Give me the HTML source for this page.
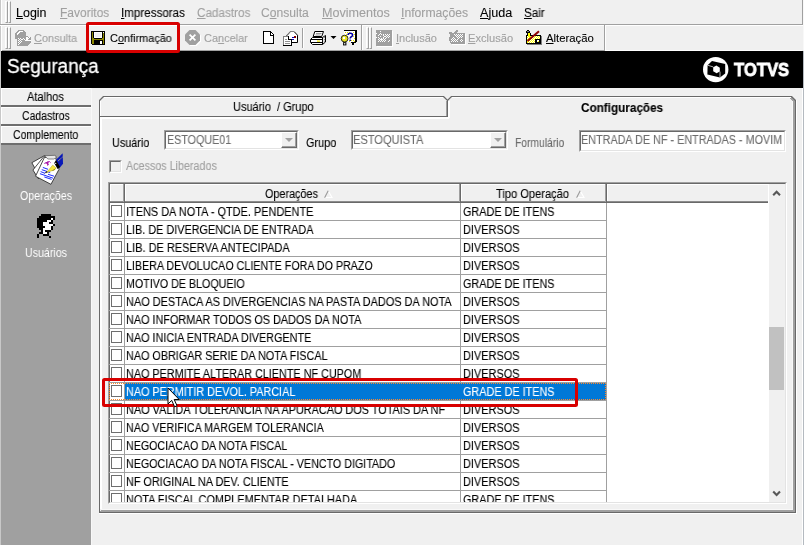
<!DOCTYPE html>
<html><head><meta charset="utf-8">
<style>
*{box-sizing:border-box;margin:0;padding:0}
html,body{width:804px;height:545px;overflow:hidden;background:#f0f0f0;font-family:"Liberation Sans",sans-serif}
.a{position:absolute}
.t{position:absolute;white-space:pre;transform-origin:0 0;will-change:transform;-webkit-text-stroke:.1px currentColor;font-family:"Liberation Sans",sans-serif}
.t u{text-decoration:underline;text-decoration-thickness:1px;text-underline-offset:1px}
.gr{position:absolute;width:3px;border-left:1px solid #fff;border-top:1px solid #fff;border-right:1px solid #a0a0a0;border-bottom:1px solid #a0a0a0}
.cb{position:absolute;width:11px;height:12px;border:1px solid #6e6e6e;background:#fff}
.sbtn{position:absolute;left:1px;width:90px;background:#f0f0f0;border-top:1px solid #fff;border-left:1px solid #fff}
.combo{position:absolute;height:20px;background:#fff;border-top:1px solid #a0a0a0;border-left:1px solid #a0a0a0;border-right:1px solid #fff;border-bottom:1px solid #fff}
.combo i{position:absolute;left:0;top:0;right:0;bottom:0;border-top:1px solid #696969;border-left:1px solid #696969;border-right:1px solid #e3e3e3;border-bottom:1px solid #e3e3e3}
.dbtn{position:absolute;width:16px;height:16px;background:#f0f0f0;border-top:1px solid #fff;border-left:1px solid #fff;border-right:1px solid #696969;border-bottom:1px solid #696969}
.dbtn i{position:absolute;left:0;top:0;right:0;bottom:0;border-right:1px solid #a0a0a0;border-bottom:1px solid #a0a0a0}
.dbtn b{position:absolute;left:3px;top:5px;width:0;height:0;border-left:4px solid transparent;border-right:4px solid transparent;border-top:4px solid #a0a0a0}
</style></head><body>
<!-- left edge strip -->
<div class="a" style="left:0;top:0;width:1px;height:545px;background:#c8c8c8"></div>
<div class="a" style="left:1px;top:0;width:1px;height:51px;background:#fff"></div>
<!-- menu grips -->
<div class="gr" style="left:5px;top:1px;height:22px"></div>
<div class="gr" style="left:8px;top:1px;height:22px"></div>
<!-- menu/toolbar separator -->
<div class="a" style="left:0;top:24px;width:804px;height:1px;background:#a0a0a0"></div>
<div class="a" style="left:0;top:25px;width:804px;height:1px;background:#fff"></div>
<!-- toolbar grips -->
<div class="gr" style="left:5px;top:27px;height:22px"></div>
<div class="gr" style="left:8px;top:27px;height:22px"></div>
<div class="gr" style="left:366px;top:27px;height:22px"></div>
<div class="gr" style="left:369px;top:27px;height:22px"></div>
<!-- toolbar separators -->
<div class="a" style="left:302px;top:28px;width:1px;height:20px;background:#a0a0a0"></div>
<div class="a" style="left:303px;top:28px;width:1px;height:20px;background:#fff"></div>
<div class="a" style="left:361px;top:25px;width:1px;height:26px;background:#a0a0a0"></div>
<div class="a" style="left:362px;top:26px;width:1px;height:25px;background:#fff"></div>
<div class="a" style="left:604px;top:25px;width:1px;height:26px;background:#a0a0a0"></div>
<div class="a" style="left:605px;top:26px;width:1px;height:25px;background:#fff"></div>
<div class="a" style="left:2px;top:50px;width:603px;height:1px;background:#a0a0a0"></div>
<div class="a" style="left:605px;top:50px;width:197px;height:1px;background:#fff"></div>
<svg class="a" style="left:0;top:26px" width="610" height="25" viewBox="0 26 610 25">
<!-- Consulta (disabled) -->
<g shape-rendering="crispEdges">
<path d="M18 30 H23 L26 33 V39 H17 V39 H15 V33 Z" fill="#a0a0a0"/>
<path d="M17 39 H26 V41 H31 V42 L27 46 H17 Z" fill="#a0a0a0"/>
<path d="M26 37 h4 v1 h1 v3 h-5z" fill="#fff"/>
<path d="M26 36 h2 v1 h1 v1 h1 v-1 h1 v3 h-3 v-1 h1 v-1 h-1 v-1 h-2 z" fill="#a0a0a0"/>
<path d="M17 33 h1 v-1 h1 v-1 h2 v1 h-1 v1 h-1 v1 h-1 v1 h-1z M21 31 h2 v1 h-2z" fill="#fff"/>
<path d="M18 38h1v1h-1z M20 38h1v1h-1z M19 39h1v1h-1z M21 39h1v1h-1z M18 40h1v1h-1z M20 40h1v1h-1z M22 39h1v1h-1z M23 38h1v1h-1z M24 39h1v1h-1z M25 40h1v1h-1z M19 41h1v1h-1z M18 42h1v1h-1z M18 44h1v1h-1z M19 43h1v1h-1z M20 42h1v1h-1z M21 41h1v1h-1z" fill="#fff"/>
</g>
<!-- floppy -->
<g shape-rendering="crispEdges">
<rect x="91" y="31" width="14" height="14" fill="#000"/>
<rect x="92" y="32" width="1" height="12" fill="#8c8800"/>
<rect x="103" y="33" width="1" height="11" fill="#8c8800"/>
<rect x="103" y="32" width="1" height="1" fill="#fff"/>
<rect x="92" y="38" width="2" height="6" fill="#8c8800"/>
<rect x="102" y="38" width="2" height="2" fill="#8c8800"/>
<rect x="92" y="39" width="12" height="1" fill="#8c8800"/>
<rect x="94" y="32" width="8" height="6" fill="#fff"/>
<rect x="95" y="33" width="6" height="4" fill="#f0f0f0"/>
<rect x="100" y="41" width="2" height="3" fill="#fff"/>
<rect x="91" y="44" width="1" height="1" fill="#f0f0f0"/>
</g>
<!-- Cancelar (disabled) -->
<path d="M190.5 31 H196.5 L201 35.5 V41.5 L196.5 46 H190.5 L186 41.5 V35.5 Z" fill="#fff"/>
<path d="M189.5 30 H195.5 L200 34.5 V40.5 L195.5 45 H189.5 L185 40.5 V34.5 Z" fill="#a0a0a0"/>
<path d="M189.6 34.6 L195.4 40.4 M195.4 34.6 L189.6 40.4" stroke="#fff" stroke-width="1.7" fill="none"/>
<!-- new doc -->
<g shape-rendering="crispEdges">
<path d="M263.5 31.5 H270.5 L273.5 34.5 V43.5 H263.5 Z" fill="#fff" stroke="#000" stroke-width="1"/>
<path d="M270 32 v3 h3" fill="none" stroke="#000" stroke-width="1"/>
<rect x="263" y="31" width="1" height="13" fill="#000"/>
<rect x="263" y="43" width="11" height="1" fill="#000"/>
</g>
<!-- mail/doc -->
<path d="M290.5 31.5 H294 L297.5 35.2 V42.5 H286.5 V35.8 Z" fill="#fff" stroke="#000" stroke-width="1"/>
<path d="M294 31.5 H290.5 L286.5 35.8" stroke="#808080" stroke-width="1.1" fill="none"/>
<g shape-rendering="crispEdges">
<rect x="294" y="36" width="2" height="2" fill="#800000"/>
<rect x="291" y="37" width="3" height="1" fill="#0000c0"/>
<rect x="292" y="39" width="2" height="1" fill="#0000c0"/>
<rect x="283" y="36" width="9" height="10" fill="#fff"/>
<rect x="283" y="36" width="6" height="1" fill="#808080"/>
<rect x="283" y="36" width="1" height="10" fill="#808080"/>
<rect x="288" y="36" width="1" height="3" fill="#000"/>
<rect x="288" y="39" width="4" height="1" fill="#000"/>
<rect x="291" y="39" width="1" height="7" fill="#000"/>
<rect x="283" y="45" width="9" height="1" fill="#000"/>
<rect x="285" y="39" width="2" height="1" fill="#909090"/>
<rect x="285" y="41" width="5" height="1" fill="#909090"/>
<rect x="285" y="43" width="5" height="1" fill="#909090"/>
</g>
<!-- printer -->
<path d="M314.8 31.5 H323.5 L321.7 36.5 H313.2 Z" fill="#fff" stroke="#000" stroke-width="1"/>
<path d="M316 33.5 H321.5 M315.5 35 H320.5" stroke="#808080" stroke-width=".8"/>
<path d="M312.5 37.5 H322.5 L325.5 35.5 V42 L322.5 44.5 H312.5 L310.5 42.5 V39.5 Z" fill="#fff" stroke="#000" stroke-width="1"/>
<path d="M311 39.5 H322.5 M311 42.5 H322.5 M322.5 37.5 V44.5" stroke="#000" stroke-width="1" fill="none"/>
<rect x="311" y="39" width="12" height="1" fill="#000"/>
<rect x="311" y="42" width="12" height="1" fill="#000"/>
<rect x="317" y="40.5" width="3" height="1.2" fill="#e8e000"/>
<path d="M323.5 38 l1.5 -1 M323.5 40 l1.5 -1 M323.5 42 l1.5 -1.2" stroke="#606060" stroke-width=".8"/>
<!-- dropdown -->
<path d="M330.5 36 H336.5 L333.5 39 Z" fill="#000"/>
<!-- help -->
<g shape-rendering="crispEdges">
<rect x="344" y="31" width="12" height="11" fill="#fff"/>
<rect x="344" y="30" width="12" height="1" fill="#000"/>
<rect x="355" y="30" width="2" height="12" fill="#000"/>
<rect x="351" y="42" width="5" height="1" fill="#000"/>
<rect x="352" y="43" width="2" height="2" fill="#000"/>
<path d="M345 32h1v1h-1z M347 32h1v1h-1z M349 32h1v1h-1z M353 32h1v1h-1z M346 34h1v1h-1z M354 34h1v1h-1z M353 36h1v1h-1z M354 38h1v1h-1z M353 40h1v1h-1z M351 40h1v1h-1z M349 41h1v1h-1z M354 41h1v1h-1z" fill="#e8e000"/>
</g>
<path d="M348 35 Q348 33.2 350.3 33.2 Q352.6 33.2 352.6 35 Q352.6 36.3 351 37 Q350.2 37.5 350.2 38.6" fill="none" stroke="#0000a0" stroke-width="1.6"/>
<rect x="349.4" y="39.6" width="1.6" height="1.4" fill="#0000a0"/>
<circle cx="344.6" cy="38.6" r="3.4" fill="#e4e020" stroke="#000" stroke-width=".8"/>
<circle cx="344" cy="38" r="1.2" fill="#fff"/>
<rect x="343" y="42.2" width="3.4" height="3.2" fill="#000"/>
<rect x="343.8" y="43.2" width="1.6" height="1.2" fill="#fff"/>
<!-- Inclusao (disabled) -->
<g shape-rendering="crispEdges">
<rect x="377" y="31" width="16" height="16" fill="#fff"/>
<rect x="376" y="30" width="16" height="16" fill="#a0a0a0"/>
<path d="M380 31h1v1h-1z M380 33h1v1h-1z M379 34h1v1h-1z M381 34h1v1h-1z M378 35h1v1h-1z M380 36h1v1h-1z M378 37h1v1h-1z M379 38h1v1h-1z M378 39h1v1h-1z M380 39h1v1h-1z M379 40h1v1h-1z M381 40h1v1h-1z M378 41h1v1h-1z M380 41h1v1h-1z M382 41h1v1h-1z M384 41h1v1h-1z M381 38h1v2h-1z M383 34h1v2h-1z M383 37h1v2h-1z M382 39h1v1h-1z M384 39h1v1h-1z M383 40h1v1h-1z M385 40h1v1h-1z M385 38h1v1h-1z M384 36h2v1h-2z M385 34h1v1h-1z M387 34h1v1h-1z M389 34h1v1h-1z M386 35h1v1h-1z M388 35h1v1h-1z M387 36h1v1h-1z M389 36h1v1h-1z M386 37h1v1h-1z M388 37h1v1h-1z M389 40h1v1h-1z M388 41h1v1h-1z M376 33h1v1h-1z M376 37h1v1h-1z" fill="#fff"/>
</g>
<!-- Exclusao (disabled) -->
<g shape-rendering="crispEdges">
<path d="M451 34 H466 V45 H452 V44 H451Z" fill="#fff"/>
<path d="M450 33 H465 V44 H451 V43 H450 V41 H449 V37 H450 V34 H449 V32 H452 V33 Z" fill="#a0a0a0"/>
<path d="M453 33 L456 30 H458 V31 L456 33 Z" fill="#a0a0a0"/>
<path d="M454 34h1v1h-1z M456 34h1v1h-1z M458 34h1v1h-1z M460 34h1v1h-1z M462 34h1v1h-1z M455 35h1v1h-1z M457 35h1v1h-1z M459 35h1v1h-1z M461 35h1v1h-1z M456 36h1v1h-1z M458 36h1v1h-1z M460 36h1v1h-1z M462 36h1v1h-1z M457 37h1v1h-1z M459 37h1v1h-1z M461 37h1v1h-1z M453 37h1v1h-1z M452 38h1v1h-1z M454 38h1v1h-1z M458 38h1v1h-1z M451 39h1v1h-1z M453 39h1v1h-1z M455 39h1v1h-1z M457 39h1v1h-1z M452 40h1v1h-1z M454 40h1v1h-1z M456 40h1v1h-1z M451 41h1v1h-1z M453 41h1v1h-1z M455 41h1v1h-1z M457 41h1v1h-1z M461 39h1v1h-1z M460 40h1v1h-1z M462 40h1v1h-1z M461 41h1v1h-1z" fill="#fff"/>
</g>
<!-- Alteracao -->
<g shape-rendering="crispEdges">
<rect x="527" y="36" width="15" height="9" fill="#808080"/>
<rect x="526" y="35" width="15" height="9" fill="#000"/>
<rect x="527" y="36" width="13" height="7" fill="#ffff00"/>
<path d="M528 36h1v1h-1z M534 36h1v1h-1z M536 36h1v1h-1z M538 36h1v1h-1z M533 37h1v1h-1z M535 37h1v1h-1z M537 37h1v1h-1z M539 37h1v1h-1z M527 38h1v1h-1z M532 38h1v1h-1z M534 38h1v1h-1z M536 38h1v1h-1z M538 38h1v1h-1z M531 39h1v1h-1z M533 39h1v1h-1z M530 40h1v1h-1z M532 40h1v1h-1z M534 40h1v1h-1z M529 41h1v1h-1z M531 41h1v1h-1z M533 41h1v1h-1z M528 42h1v1h-1z M530 42h1v1h-1z M532 42h1v1h-1z M534 42h1v1h-1z" fill="#fff"/>
<path d="M527 36h1v1h-1z M529 36h1v1h-1z M531 36h1v1h-1z M528 37h1v1h-1z M530 37h1v1h-1z M527 38h1v1h-1z M529 38h1v1h-1z M528 39h1v1h-1z M527 40h1v1h-1z" fill="#fff"/>
<rect x="535" y="39" width="5" height="4" fill="#000"/>
<rect x="537" y="40" width="2" height="2" fill="#fff"/>
<rect x="538" y="41" width="1" height="1" fill="#ffff00"/>
<rect x="526" y="31" width="4" height="2" fill="#000"/>
<rect x="527" y="30" width="2" height="1" fill="#000"/>
<rect x="527" y="31" width="2" height="1" fill="#808080"/>
<rect x="527" y="33" width="2" height="2" fill="#000"/>
<rect x="528" y="33" width="2" height="4" fill="#ffff00"/>
<rect x="529" y="35" width="2" height="3" fill="#ffff00"/>
<rect x="530" y="33" width="1" height="3" fill="#000"/>
</g>
<path d="M527.5 41 L539 31.2" stroke="#900000" stroke-width="2" fill="none"/>
</svg>

<!-- banner -->
<div class="a" style="left:1px;top:51px;width:802px;height:37px;background:#000"></div>
<div class="a" style="left:802px;top:0;width:1px;height:25px;background:#a0a0a0"></div>
<div class="a" style="left:803px;top:0;width:1px;height:51px;background:#f8f8f8"></div>
<div class="a" style="left:802px;top:88px;width:1px;height:457px;background:#fff"></div>
<div class="a" style="left:803px;top:51px;width:1px;height:494px;background:#b4bac0"></div>

<!-- sidebar -->
<div class="a" style="left:1px;top:88px;width:90px;height:457px;background:#a0a0a0"></div>
<div class="a" style="left:91px;top:88px;width:1px;height:457px;background:#f8f8f8"></div>
<div class="sbtn" style="top:88px;height:17px"></div>
<div class="sbtn" style="top:107px;height:17px"></div>
<div class="sbtn" style="top:126px;height:17px"></div>
<div class="a" style="left:1px;top:105px;width:90px;height:2px;background:#6e6e6e"></div>
<div class="a" style="left:1px;top:124px;width:90px;height:2px;background:#6e6e6e"></div>
<div class="a" style="left:1px;top:143px;width:90px;height:2px;background:#6e6e6e"></div>
<!-- Operacoes icon -->
<svg class="a" style="left:26px;top:148px" width="44" height="40" viewBox="0 0 600 545">
<g stroke="#202020" stroke-width="11" stroke-linejoin="round">
<path d="M80 200 L250 105 L330 135 L150 330 Z" fill="#fff"/>
<path d="M95 300 L240 120 L400 110 L170 420 Z" fill="#fff"/>
<path d="M250 130 L400 120 L450 290 L340 495 L130 385 Z" fill="#fff"/>
</g>
<path d="M250 105 L390 100 L420 125 L380 150 L300 150 Z" fill="#e8e8e8" stroke="#404040" stroke-width="8"/>
<g stroke="#1020ff" stroke-width="13" fill="none">
<path d="M230 265 L300 290"/><path d="M215 295 L330 335"/><path d="M200 322 L260 345 M300 358 L385 385"/><path d="M190 350 L370 412"/><path d="M250 395 L350 428"/>
</g>
<path d="M250 210 L320 185 L335 200 M300 180 L295 240 M270 200 L310 225" stroke="#a000a0" stroke-width="13" fill="none"/>
<path d="M410 160 L500 70 L505 215 L455 275 Z" fill="#0818b8"/>
<path d="M438 176 L498 124" stroke="#ffe860" stroke-width="13" stroke-dasharray="11 11"/>
<path d="M385 205 L410 165 L465 260 L430 285 Z" fill="#000"/>
<circle cx="405" cy="210" r="8" fill="#fff"/>
<path d="M365 232 L412 272 L385 300 L275 338 Z" fill="#f4e640" stroke="#807000" stroke-width="4"/>
<path d="M408 276 L385 302 L345 312 Z" fill="#807000"/>
<path d="M292 330 L250 348 L280 318 Z" fill="#000"/>
</svg>
<!-- Usuarios icon -->
<svg class="a" style="left:30px;top:208px" width="32" height="34" viewBox="0 0 513 545" shape-rendering="crispEdges">
<g fill="#000">
<rect x="175" y="95" width="160" height="35"/>
<rect x="145" y="128" width="255" height="34"/>
<rect x="115" y="160" width="285" height="32"/>
<rect x="115" y="190" width="255" height="36"/>
<rect x="115" y="224" width="95" height="98"/>
<rect x="115" y="290" width="125" height="32"/>
<rect x="145" y="320" width="65" height="32"/>
<rect x="180" y="350" width="30" height="36"/>
<rect x="150" y="385" width="60" height="30"/>
<rect x="115" y="420" width="30" height="56"/>
<rect x="210" y="420" width="95" height="26"/>
<rect x="275" y="380" width="30" height="60"/>
<rect x="305" y="450" width="30" height="28"/>
<rect x="340" y="290" width="30" height="60"/>
<rect x="370" y="258" width="30" height="28"/>
</g>
<g fill="#fff">
<rect x="340" y="160" width="30" height="32"/>
<rect x="275" y="195" width="65" height="32"/>
<rect x="210" y="225" width="160" height="66"/>
<rect x="240" y="290" width="100" height="60"/>
<rect x="210" y="320" width="35" height="96"/>
<rect x="245" y="380" width="30" height="36"/>
</g>
<g fill="#000">
<rect x="305" y="228" width="65" height="24"/>
<rect x="340" y="195" width="30" height="34"/>
<rect x="245" y="355" width="90" height="26"/>
</g>
</svg>

<!-- tab panel -->
<svg class="a" style="left:0;top:0" width="804" height="545" shape-rendering="crispEdges">
<g fill="none" stroke-width="1">
<!-- white highlights -->
<path d="M100.5 101 V509" stroke="#fff"/>
<path d="M101.5 118 V509" stroke="#fff"/>
<path d="M104 97.5 H443" stroke="#fff"/>
<path d="M452 97.5 H792" stroke="#fff"/>
<path d="M100 117.5 H449 M100 118.5 H449" stroke="#fff"/>
<path d="M448.5 101 V118 M449.5 101 V118" stroke="#fff"/>
<path d="M792.5 101 V510" stroke="#f8f8f8"/>
<path d="M101 509.5 H793" stroke="#f8f8f8"/>
<path d="M796.5 100 V514 M99 513.5 H797" stroke="#fff"/>
<!-- gray -->
<path d="M793.5 101 V512 M794.5 100 V512" stroke="#a0a0a0"/>
<path d="M101 510.5 H795 M100 511.5 H795" stroke="#a0a0a0"/>
<path d="M446.5 101 V116" stroke="#a0a0a0"/>
<!-- dark -->
<path d="M99.5 100 V513" stroke="#696969"/>
<path d="M103 96.5 H444" stroke="#696969"/>
<path d="M451 96.5 H792" stroke="#696969"/>
<path d="M99 116.5 H448" stroke="#696969"/>
<path d="M447.5 100 V117" stroke="#696969"/>
<path d="M795.5 100 V513" stroke="#696969"/>
<path d="M99 512.5 H796" stroke="#696969"/>
</g>
<path d="M790.6 97.6 L794 101" stroke="#a0a0a0" stroke-width="2.2" fill="none"/>
<g fill="none" stroke="#696969" stroke-width="1.2" shape-rendering="auto">
<path d="M99.5 100.5 L103.5 96.5"/>
<path d="M443.5 96.5 L447.5 100.5 L451.5 96.5"/>
<path d="M791.5 96.5 L795.5 100.5"/>
</g>
</svg>
<!-- form controls -->
<div class="combo" style="left:164px;top:130px;width:135px"><i></i></div>
<div class="dbtn" style="left:281px;top:132px"><i></i><b></b></div>
<div class="combo" style="left:351px;top:130px;width:157px"><i></i></div>
<div class="dbtn" style="left:490px;top:132px"><i></i><b></b></div>
<div class="combo" style="left:579px;top:130px;width:207px;height:22px"><i></i></div>
<!-- disabled checkbox -->
<div class="combo" style="left:109px;top:160px;width:13px;height:13px;background:#f0f0f0"><i></i></div>
<!-- grid -->
<div class="a" style="left:108px;top:182px;width:679px;height:322px;background:#fff;border-top:1px solid #a0a0a0;border-left:1px solid #a0a0a0;border-right:1px solid #fff;border-bottom:1px solid #fff"></div>
<div class="a" style="left:109px;top:183px;width:677px;height:320px;border-top:1px solid #696969;border-left:1px solid #696969;border-right:1px solid #e3e3e3;border-bottom:1px solid #e3e3e3"></div>
<div id="gridclip" class="a" style="left:0;top:0;width:804px;height:502px;overflow:hidden">
<!-- header -->
<div class="a" style="left:110px;top:184px;width:658px;height:17px;background:#f0f0f0"></div>
<div class="a" style="left:110px;top:184px;width:658px;height:1px;background:#fff"></div>
<div class="a" style="left:110px;top:184px;width:1px;height:17px;background:#fff"></div>
<div class="a" style="left:125px;top:184px;width:1px;height:17px;background:#fff"></div>
<div class="a" style="left:461px;top:184px;width:1px;height:17px;background:#fff"></div>
<div class="a" style="left:607px;top:184px;width:1px;height:17px;background:#fff"></div>
<div class="a" style="left:110px;top:201px;width:658px;height:1px;background:#8c8c8c"></div>
<div class="a" style="left:110px;top:202px;width:658px;height:1px;background:#696969"></div>
<div class="a" style="left:123px;top:184px;width:1px;height:18px;background:#a0a0a0"></div>
<div class="a" style="left:124px;top:184px;width:1px;height:19px;background:#696969"></div>
<div class="a" style="left:459px;top:184px;width:1px;height:18px;background:#a0a0a0"></div>
<div class="a" style="left:460px;top:184px;width:1px;height:19px;background:#696969"></div>
<div class="a" style="left:605px;top:184px;width:1px;height:18px;background:#a0a0a0"></div>
<div class="a" style="left:606px;top:184px;width:1px;height:19px;background:#696969"></div>
<!-- column lines -->
<div class="a" style="left:124px;top:203px;width:1px;height:299px;background:#a0a0a0"></div>
<div class="a" style="left:460px;top:203px;width:1px;height:299px;background:#a0a0a0"></div>
<div class="a" style="left:606px;top:203px;width:1px;height:299px;background:#a0a0a0"></div>
<div class="a" style="left:109px;top:220px;width:498px;height:1px;background:#a0a0a0"></div>
<div class="cb" style="left:111px;top:205px"></div>
<div class="t" style="left:126.04px;top:205px;font-size:12px;line-height:14px;transform:scaleX(0.9106);color:#000;font-weight:400;">ITENS DA NOTA - QTDE. PENDENTE</div>
<div class="t" style="left:462.54px;top:205px;font-size:12px;line-height:14px;transform:scaleX(0.9028);color:#000;font-weight:400;">GRADE DE ITENS</div>
<div class="a" style="left:109px;top:238px;width:498px;height:1px;background:#a0a0a0"></div>
<div class="cb" style="left:111px;top:223px"></div>
<div class="t" style="left:126.04px;top:223px;font-size:12px;line-height:14px;transform:scaleX(0.9037);color:#000;font-weight:400;">LIB. DE DIVERGENCIA DE ENTRADA</div>
<div class="t" style="left:462.53px;top:223px;font-size:12px;line-height:14px;transform:scaleX(0.9113);color:#000;font-weight:400;">DIVERSOS</div>
<div class="a" style="left:109px;top:256px;width:498px;height:1px;background:#a0a0a0"></div>
<div class="cb" style="left:111px;top:241px"></div>
<div class="t" style="left:126.03px;top:241px;font-size:12px;line-height:14px;transform:scaleX(0.9160);color:#000;font-weight:400;">LIB. DE RESERVA ANTECIPADA</div>
<div class="t" style="left:462.53px;top:241px;font-size:12px;line-height:14px;transform:scaleX(0.9113);color:#000;font-weight:400;">DIVERSOS</div>
<div class="a" style="left:109px;top:274px;width:498px;height:1px;background:#a0a0a0"></div>
<div class="cb" style="left:111px;top:259px"></div>
<div class="t" style="left:126.05px;top:259px;font-size:12px;line-height:14px;transform:scaleX(0.8915);color:#000;font-weight:400;">LIBERA DEVOLUCAO CLIENTE FORA DO PRAZO</div>
<div class="t" style="left:462.53px;top:259px;font-size:12px;line-height:14px;transform:scaleX(0.9113);color:#000;font-weight:400;">DIVERSOS</div>
<div class="a" style="left:109px;top:292px;width:498px;height:1px;background:#a0a0a0"></div>
<div class="cb" style="left:111px;top:277px"></div>
<div class="t" style="left:126.05px;top:277px;font-size:12px;line-height:14px;transform:scaleX(0.8902);color:#000;font-weight:400;">MOTIVO DE BLOQUEIO</div>
<div class="t" style="left:462.54px;top:277px;font-size:12px;line-height:14px;transform:scaleX(0.9028);color:#000;font-weight:400;">GRADE DE ITENS</div>
<div class="a" style="left:109px;top:310px;width:498px;height:1px;background:#a0a0a0"></div>
<div class="cb" style="left:111px;top:295px"></div>
<div class="t" style="left:126.04px;top:295px;font-size:12px;line-height:14px;transform:scaleX(0.9101);color:#000;font-weight:400;">NAO DESTACA AS DIVERGENCIAS NA PASTA DADOS DA NOTA</div>
<div class="t" style="left:462.53px;top:295px;font-size:12px;line-height:14px;transform:scaleX(0.9113);color:#000;font-weight:400;">DIVERSOS</div>
<div class="a" style="left:109px;top:328px;width:498px;height:1px;background:#a0a0a0"></div>
<div class="cb" style="left:111px;top:313px"></div>
<div class="t" style="left:126.04px;top:313px;font-size:12px;line-height:14px;transform:scaleX(0.9026);color:#000;font-weight:400;">NAO INFORMAR TODOS OS DADOS DA NOTA</div>
<div class="t" style="left:462.53px;top:313px;font-size:12px;line-height:14px;transform:scaleX(0.9113);color:#000;font-weight:400;">DIVERSOS</div>
<div class="a" style="left:109px;top:346px;width:498px;height:1px;background:#a0a0a0"></div>
<div class="cb" style="left:111px;top:331px"></div>
<div class="t" style="left:126.04px;top:331px;font-size:12px;line-height:14px;transform:scaleX(0.9028);color:#000;font-weight:400;">NAO INICIA ENTRADA DIVERGENTE</div>
<div class="t" style="left:462.53px;top:331px;font-size:12px;line-height:14px;transform:scaleX(0.9113);color:#000;font-weight:400;">DIVERSOS</div>
<div class="a" style="left:109px;top:364px;width:498px;height:1px;background:#a0a0a0"></div>
<div class="cb" style="left:111px;top:349px"></div>
<div class="t" style="left:126.04px;top:349px;font-size:12px;line-height:14px;transform:scaleX(0.9003);color:#000;font-weight:400;">NAO OBRIGAR SERIE DA NOTA FISCAL</div>
<div class="t" style="left:462.53px;top:349px;font-size:12px;line-height:14px;transform:scaleX(0.9113);color:#000;font-weight:400;">DIVERSOS</div>
<div class="a" style="left:109px;top:382px;width:498px;height:1px;background:#a0a0a0"></div>
<div class="cb" style="left:111px;top:367px"></div>
<div class="t" style="left:126.04px;top:367px;font-size:12px;line-height:14px;transform:scaleX(0.9010);color:#000;font-weight:400;">NAO PERMITE ALTERAR CLIENTE NF CUPOM</div>
<div class="t" style="left:462.53px;top:367px;font-size:12px;line-height:14px;transform:scaleX(0.9113);color:#000;font-weight:400;">DIVERSOS</div>
<div class="a" style="left:125px;top:383px;width:481px;height:17px;background:#0078d7"></div>
<div class="a" style="left:109px;top:400px;width:498px;height:1px;background:#a0a0a0"></div>
<div class="cb" style="left:111px;top:385px"></div>
<div class="t" style="left:126.04px;top:385px;font-size:12px;line-height:14px;transform:scaleX(0.9014);color:#fff;font-weight:400;-webkit-text-stroke:.1px currentColor;">NAO PERMITIR DEVOL. PARCIAL</div>
<div class="t" style="left:462.54px;top:385px;font-size:12px;line-height:14px;transform:scaleX(0.9028);color:#fff;font-weight:400;-webkit-text-stroke:.1px currentColor;">GRADE DE ITENS</div>
<div class="a" style="left:109px;top:418px;width:498px;height:1px;background:#a0a0a0"></div>
<div class="cb" style="left:111px;top:403px"></div>
<div class="t" style="left:126.04px;top:403px;font-size:12px;line-height:14px;transform:scaleX(0.9063);color:#000;font-weight:400;">NAO VALIDA TOLERANCIA NA APURACAO DOS TOTAIS DA NF</div>
<div class="t" style="left:462.53px;top:403px;font-size:12px;line-height:14px;transform:scaleX(0.9113);color:#000;font-weight:400;">DIVERSOS</div>
<div class="a" style="left:109px;top:436px;width:498px;height:1px;background:#a0a0a0"></div>
<div class="cb" style="left:111px;top:421px"></div>
<div class="t" style="left:126.05px;top:421px;font-size:12px;line-height:14px;transform:scaleX(0.8949);color:#000;font-weight:400;">NAO VERIFICA MARGEM TOLERANCIA</div>
<div class="t" style="left:462.53px;top:421px;font-size:12px;line-height:14px;transform:scaleX(0.9113);color:#000;font-weight:400;">DIVERSOS</div>
<div class="a" style="left:109px;top:454px;width:498px;height:1px;background:#a0a0a0"></div>
<div class="cb" style="left:111px;top:439px"></div>
<div class="t" style="left:126.05px;top:439px;font-size:12px;line-height:14px;transform:scaleX(0.8899);color:#000;font-weight:400;">NEGOCIACAO DA NOTA FISCAL</div>
<div class="t" style="left:462.53px;top:439px;font-size:12px;line-height:14px;transform:scaleX(0.9113);color:#000;font-weight:400;">DIVERSOS</div>
<div class="a" style="left:109px;top:472px;width:498px;height:1px;background:#a0a0a0"></div>
<div class="cb" style="left:111px;top:457px"></div>
<div class="t" style="left:126.05px;top:457px;font-size:12px;line-height:14px;transform:scaleX(0.8926);color:#000;font-weight:400;">NEGOCIACAO DA NOTA FISCAL - VENCTO DIGITADO</div>
<div class="t" style="left:462.53px;top:457px;font-size:12px;line-height:14px;transform:scaleX(0.9113);color:#000;font-weight:400;">DIVERSOS</div>
<div class="a" style="left:109px;top:490px;width:498px;height:1px;background:#a0a0a0"></div>
<div class="cb" style="left:111px;top:475px"></div>
<div class="t" style="left:126.04px;top:475px;font-size:12px;line-height:14px;transform:scaleX(0.9043);color:#000;font-weight:400;">NF ORIGINAL NA DEV. CLIENTE</div>
<div class="t" style="left:462.53px;top:475px;font-size:12px;line-height:14px;transform:scaleX(0.9113);color:#000;font-weight:400;">DIVERSOS</div>
<div class="a" style="left:109px;top:508px;width:498px;height:1px;background:#a0a0a0"></div>
<div class="cb" style="left:111px;top:493px"></div>
<div class="t" style="left:126.04px;top:493px;font-size:12px;line-height:14px;transform:scaleX(0.9069);color:#000;font-weight:400;">NOTA FISCAL COMPLEMENTAR DETALHADA</div>
<div class="t" style="left:462.54px;top:493px;font-size:12px;line-height:14px;transform:scaleX(0.9028);color:#000;font-weight:400;">GRADE DE ITENS</div>

</div>
<!-- scrollbar -->
<div class="a" style="left:769px;top:184px;width:16px;height:318px;background:#f0f0f0"></div>
<div class="a" style="left:769px;top:327px;width:15px;height:63px;background:#c1c1c1"></div>
<svg class="a" style="left:768px;top:184px" width="17" height="318"><g fill="none" stroke="#585858" stroke-width="2.1" stroke-linejoin="miter">
<path d="M5.2 11.3 L8.6 7.8 L12 11.3"/><path d="M5.2 307.6 L8.6 311.1 L12 307.6"/></g></svg>
<!--SCROLL-->
<div class="t" style="left:16.43px;top:6px;font-size:12px;line-height:14px;transform:scaleX(1.0387);color:#000;font-weight:400;"><u>L</u>ogin</div>
<div class="t" style="left:59.56px;top:6px;font-size:12px;line-height:14px;transform:scaleX(0.9970);color:#a0a0a0;font-weight:400;-webkit-text-stroke:.1px currentColor;"><u>F</u>avoritos</div>
<div class="t" style="left:120.79px;top:6px;font-size:12px;line-height:14px;transform:scaleX(0.9679);color:#000;font-weight:400;"><u>I</u>mpressoras</div>
<div class="t" style="left:196.58px;top:6px;font-size:12px;line-height:14px;transform:scaleX(0.9746);color:#a0a0a0;font-weight:400;-webkit-text-stroke:.1px currentColor;"><u>C</u>adastros</div>
<div class="t" style="left:261.45px;top:6px;font-size:12px;line-height:14px;transform:scaleX(1.0092);color:#a0a0a0;font-weight:400;-webkit-text-stroke:.1px currentColor;">C<u>o</u>nsulta</div>
<div class="t" style="left:321.62px;top:6px;font-size:12px;line-height:14px;transform:scaleX(1.0483);color:#a0a0a0;font-weight:400;-webkit-text-stroke:.1px currentColor;"><u>M</u>ovimentos</div>
<div class="t" style="left:401.45px;top:6px;font-size:12px;line-height:14px;transform:scaleX(1.0149);color:#a0a0a0;font-weight:400;-webkit-text-stroke:.1px currentColor;"><u>I</u>nformações</div>
<div class="t" style="left:480.42px;top:6px;font-size:12px;line-height:14px;transform:scaleX(1.0524);color:#000;font-weight:400;"><u>A</u>juda</div>
<div class="t" style="left:524.08px;top:6px;font-size:12px;line-height:14px;transform:scaleX(0.9704);color:#000;font-weight:400;"><u>S</u>air</div>
<div class="t" style="left:34.14px;top:32px;font-size:11px;line-height:13px;transform:scaleX(0.9923);color:#a0a0a0;font-weight:400;-webkit-text-stroke:.1px currentColor;"><u>C</u>onsulta</div>
<div class="t" style="left:109.64px;top:32px;font-size:11px;line-height:13px;transform:scaleX(0.9908);color:#000;font-weight:400;">C<u>o</u>nfirmação</div>
<div class="t" style="left:203.83px;top:32px;font-size:11px;line-height:13px;transform:scaleX(0.9944);color:#a0a0a0;font-weight:400;-webkit-text-stroke:.1px currentColor;">Ca<u>n</u>celar</div>
<div class="t" style="left:395.83px;top:32px;font-size:11px;line-height:13px;transform:scaleX(0.9952);color:#a0a0a0;font-weight:400;-webkit-text-stroke:.1px currentColor;"><u>I</u>nclusão</div>
<div class="t" style="left:468.32px;top:32px;font-size:11px;line-height:13px;transform:scaleX(1.0100);color:#a0a0a0;font-weight:400;-webkit-text-stroke:.1px currentColor;"><u>E</u>xclusão</div>
<div class="t" style="left:545.51px;top:32px;font-size:11px;line-height:13px;transform:scaleX(1.0280);color:#000;font-weight:400;"><u>A</u>lteração</div>
<div class="t" style="left:7.17px;top:55px;font-size:20px;line-height:22px;transform:scaleX(0.9490);color:#fff;font-weight:400;-webkit-text-stroke:.3px #fff;">Segurança</div>
<div class="t" style="left:27.23px;top:90px;font-size:12px;line-height:14px;transform:scaleX(0.9221);color:#000;font-weight:400;">Atalhos</div>
<div class="t" style="left:22.07px;top:109px;font-size:12px;line-height:14px;transform:scaleX(0.8722);color:#000;font-weight:400;">Cadastros</div>
<div class="t" style="left:12.97px;top:128px;font-size:12px;line-height:14px;transform:scaleX(0.8729);color:#000;font-weight:400;">Complemento</div>
<div class="t" style="left:20.25px;top:189px;font-size:12px;line-height:14px;transform:scaleX(0.8877);color:#fff;font-weight:400;-webkit-text-stroke:0;">Operações</div>
<div class="t" style="left:24.75px;top:246px;font-size:12px;line-height:14px;transform:scaleX(0.8871);color:#fff;font-weight:400;-webkit-text-stroke:0;">Usuários</div>
<div class="t" style="left:232.63px;top:100px;font-size:12px;line-height:14px;transform:scaleX(0.9156);color:#000;font-weight:400;">Usuário  / Grupo</div>
<div class="t" style="left:580.78px;top:101px;font-size:12px;line-height:14px;transform:scaleX(0.9773);color:#000;font-weight:700;">Configurações</div>
<div class="t" style="left:111.84px;top:136px;font-size:12px;line-height:14px;transform:scaleX(0.9021);color:#000;font-weight:400;">Usuário</div>
<div class="t" style="left:306.04px;top:136px;font-size:12px;line-height:14px;transform:scaleX(0.9087);color:#000;font-weight:400;">Grupo</div>
<div class="t" style="left:514.98px;top:136px;font-size:12px;line-height:14px;transform:scaleX(0.8580);color:#6d6d6d;font-weight:400;">Formulário</div>
<div class="t" style="left:166.65px;top:133px;font-size:12px;line-height:14px;transform:scaleX(0.8928);color:#6d6d6d;font-weight:400;">ESTOQUE01</div>
<div class="t" style="left:353.42px;top:133px;font-size:12px;line-height:14px;transform:scaleX(0.9234);color:#6d6d6d;font-weight:400;">ESTOQUISTA</div>
<div class="t" style="left:581.24px;top:133px;font-size:12px;line-height:14px;transform:scaleX(0.9008);color:#6d6d6d;font-weight:400;">ENTRADA DE NF - ENTRADAS - MOVIM</div>
<div class="t" style="left:126.35px;top:159px;font-size:12px;line-height:14px;transform:scaleX(0.8957);color:#a0a0a0;font-weight:400;-webkit-text-stroke:.1px currentColor;">Acessos Liberados</div>
<div class="t" style="left:265.04px;top:187px;font-size:12px;line-height:14px;transform:scaleX(0.9013);color:#000;font-weight:400;">Operações</div>
<div class="t" style="left:496.22px;top:187px;font-size:12px;line-height:14px;transform:scaleX(0.9249);color:#000;font-weight:400;">Tipo Operação</div>

<!-- TOTVS logo -->
<svg class="a" style="left:696px;top:52px" width="104" height="36" viewBox="696 52 104 36">
<circle cx="715.7" cy="69.6" r="12.7" fill="#fff"/>
<path d="M707.6 65.2 L712 61 L725.2 64 V73.4 L720 77.6 L707.4 74.4 Z" fill="#000"/>
<path d="M713.2 67.2 L716.4 65.6 L719.8 67.8 V71.4 L716.6 73.2 L713.2 71.2 Z" fill="#fff"/>
<path d="M707.8 65.3 L713.2 66.9 M720 77.4 L720 71.6" stroke="#fff" stroke-width=".7" fill="none"/>
</svg>
<div class="t" style="left:733.5px;top:59px;font-size:19px;line-height:21px;font-weight:700;color:#fff;transform:scaleX(.875);-webkit-text-stroke:.9px #fff">TOTVS</div>
<!-- sort arrows -->
<svg class="a" style="left:320px;top:188px" width="270" height="12" viewBox="320 188 270 12">
<g fill="none" stroke-width="1.1">
<path d="M328.3 191 L332 197.5 H324.5" stroke="#fff"/><path d="M324.6 197.8 L328.2 190.8" stroke="#9a9a9a"/>
<path d="M580.3 191 L584 197.5 H576.5" stroke="#fff"/><path d="M576.6 197.8 L580.2 190.8" stroke="#9a9a9a"/>
</g></svg>
<!-- focus rect (dotted) -->
<div class="a" style="left:109px;top:383px;width:497px;height:1px;background:repeating-linear-gradient(90deg,#ff8728 0 1px,transparent 1px 2px)"></div>
<div class="a" style="left:109px;top:399px;width:497px;height:1px;background:repeating-linear-gradient(90deg,#ff8728 0 1px,transparent 1px 2px)"></div>
<div class="a" style="left:109px;top:383px;width:1px;height:17px;background:repeating-linear-gradient(180deg,#ff8728 0 1px,transparent 1px 2px)"></div>
<div class="a" style="left:605px;top:383px;width:1px;height:17px;background:repeating-linear-gradient(180deg,#ff8728 0 1px,transparent 1px 2px)"></div>
<!-- red highlight boxes -->
<div class="a" style="left:85.7px;top:21.6px;width:94.4px;height:31.8px;border:3.5px solid #d80000;border-radius:2.5px"></div>
<div class="a" style="left:101.9px;top:378.2px;width:476.2px;height:28.6px;border:3.4px solid #d80000;border-radius:2.5px"></div>
<!-- cursor -->
<svg class="a" style="left:167px;top:387px" width="14" height="21" viewBox="0 0 14 21">
<path d="M1 1 V17 L4.7 13.4 L7.6 19.8 L10 18.7 L7.2 12.5 H12.2 Z" fill="#fff" stroke="#000" stroke-width="1" stroke-linejoin="miter"/>
</svg>

</body></html>
